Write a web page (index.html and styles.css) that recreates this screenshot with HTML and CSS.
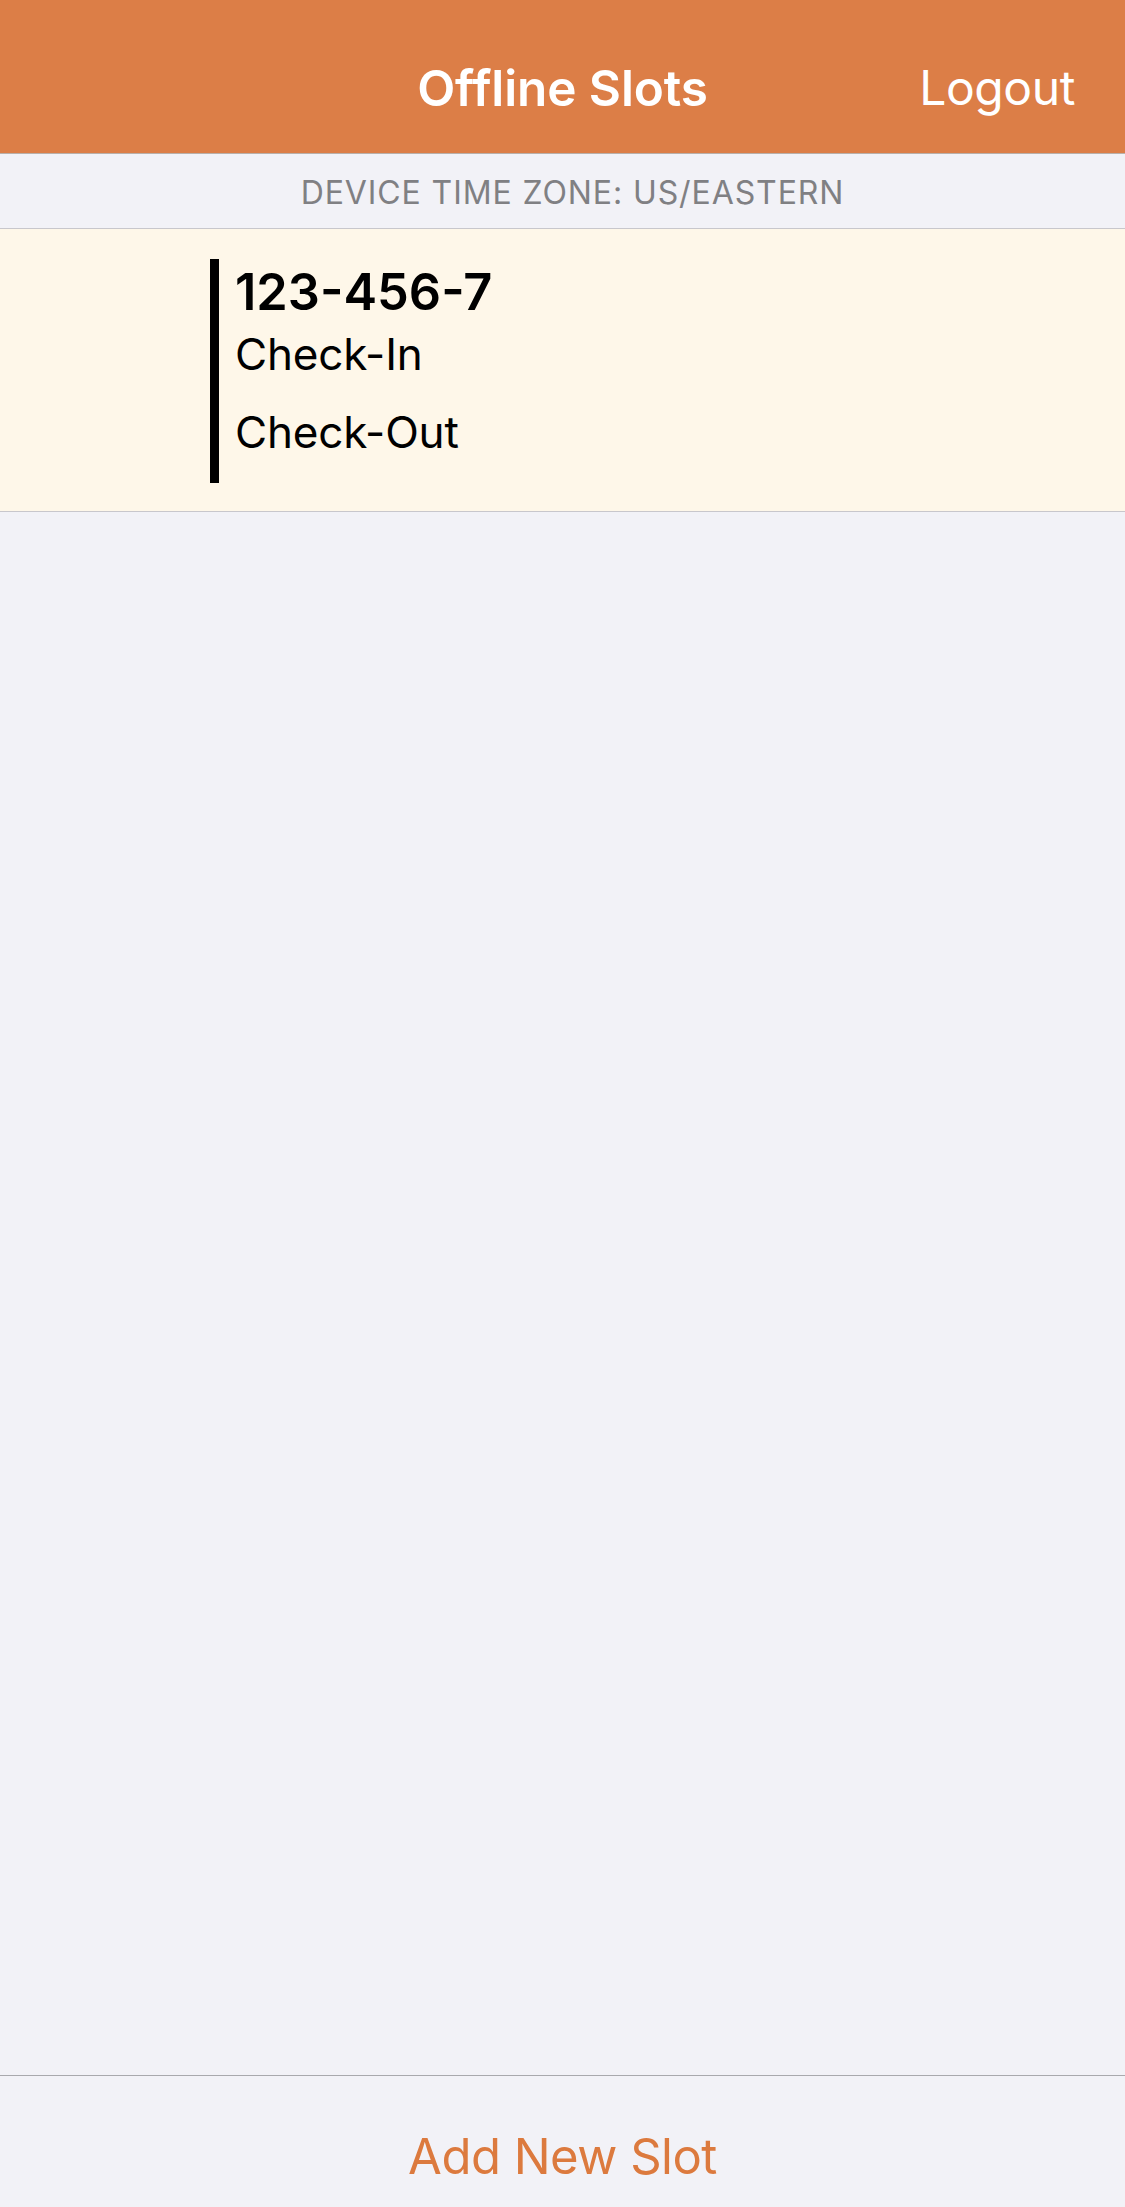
FILE: index.html
```html
<!DOCTYPE html>
<html>
<head>
<meta charset="utf-8">
<link rel="stylesheet" href="styles.css">
</head>
<body>
<div class="app">
  <header class="navbar">
    <div class="nav-side"></div>
    <h1 class="nav-title">Offline Slots</h1>
    <div class="nav-side nav-right"><span class="nav-btn">Logout</span></div>
  </header>
  <div class="tz">DEVICE TIME ZONE: US/EASTERN</div>
  <div class="list">
    <div class="slot">
      <div class="slot-bar"></div>
      <div class="slot-body">
        <div class="slot-id">123-456-7</div>
        <div class="slot-line">Check-In</div>
        <div class="slot-line slot-line2">Check-Out</div>
      </div>
    </div>
  </div>
  <div class="spacer"></div>
  <footer class="toolbar">
    <span class="toolbar-btn">Add New Slot</span>
  </footer>
</div>
</body>
</html>
```

FILE: styles.css
```css
* { box-sizing: border-box; }
html, body { margin: 0; padding: 0; }
body {
  background: #f2f2f7;
  font-family: Inter, "Noto Sans", sans-serif;
  -webkit-font-smoothing: antialiased;
}
.app {
  height: 2207px;
  display: flex;
  flex-direction: column;
}
.navbar {
  height: 154px;
  background: #dc7e47;
  border-bottom: 1px solid #b9b0aa;
  display: grid;
  grid-template-columns: 1fr auto 1fr;
  align-items: center;
  padding: 0 50px;
  color: #fff;
}
.nav-title {
  margin: 0;
  font-size: 49.5px;
  font-weight: 600;
  letter-spacing: -0.1px;
  padding-top: 22px;
}
.nav-right {
  display: flex;
  justify-content: flex-end;
  padding-top: 22px;
}
.nav-btn {
  font-size: 48px;
  font-weight: 400;
  letter-spacing: -0.4px;
}
.tz {
  height: 75px;
  display: flex;
  align-items: center;
  justify-content: center;
  font-size: 32px;
  color: #808083;
  letter-spacing: 0.9px;
  border-bottom: 1.5px solid #c8c7cc;
  padding: 2px 0 0 20px;
}
.slot {
  height: 283px;
  background: #fef7e9;
  border-bottom: 1.5px solid #c8c7cc;
  display: flex;
  padding: 30px 0 0 210px;
}
.slot-bar {
  width: 9px;
  height: 224px;
  background: #000;
}
.slot-body {
  padding-left: 16px;
  color: #000;
}
.slot-id {
  font-size: 50.5px;
  font-weight: 600;
  line-height: 60px;
  margin-top: 3px;
}
.slot-line {
  font-size: 44px;
  line-height: 56px;
  margin-top: 4px;
  letter-spacing: -0.2px;
}
.slot-line2 { margin-top: 22px; }
.spacer { flex: 1; }
.toolbar {
  height: 132px;
  border-top: 1.5px solid #a9a9ad;
  display: flex;
  justify-content: center;
  align-items: center;
  padding-top: 30px;
}
.toolbar-btn {
  font-size: 49px;
  color: #dc7a3e;
  letter-spacing: -0.5px;
}
```
